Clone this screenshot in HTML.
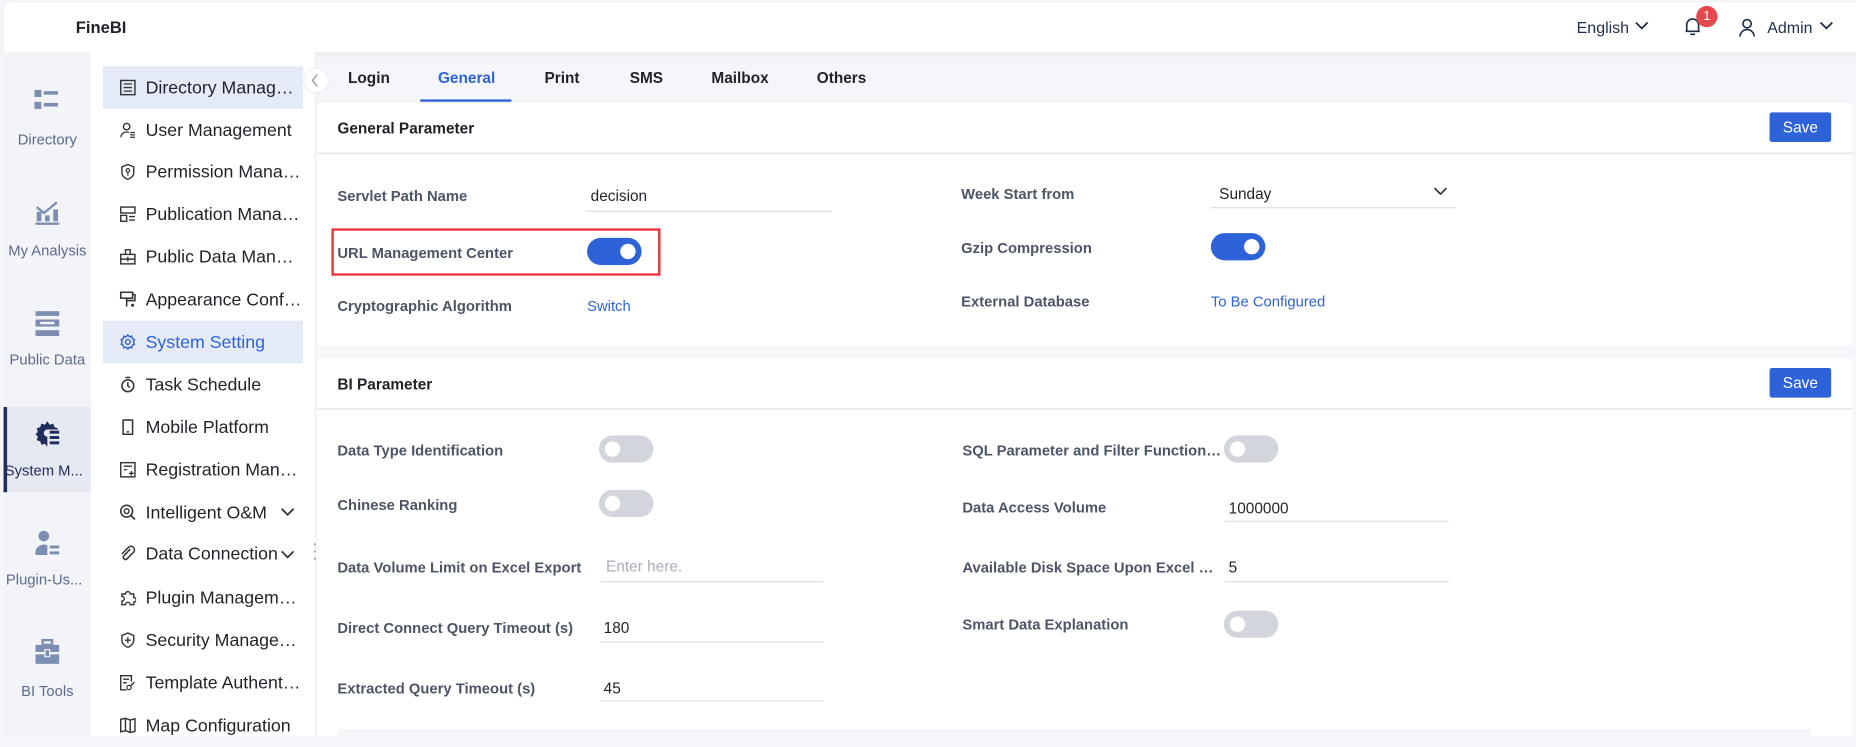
<!DOCTYPE html>
<html><head><meta charset="utf-8"><style>
*{margin:0;padding:0;box-sizing:border-box}
html,body{width:1856px;height:736px;overflow:hidden;background:#f5f6f9;font-family:"Liberation Sans",Arial,sans-serif}
#w{position:absolute;left:0;top:0;width:1568px;height:622px;transform:scale(1.18367,1.18328);transform-origin:0 0;background:#f5f6f9}
.a{position:absolute;white-space:nowrap}
.hdr{left:3px;top:2px;width:1565px;height:42px;background:#fff;border-radius:6px 0 0 0;box-shadow:0 2px 6px rgba(0,0,0,.06)}
.rail{left:3px;top:44px;width:74px;height:578px;background:#f3f4f8}
.ri{position:absolute;left:0;width:74px;text-align:center;font-size:12.5px;color:#5b6b8c}
.nav{left:77px;top:44px;width:190px;height:578px;background:#fff;border-right:1px solid #eceef3}
.ni{position:absolute;left:10px;width:169px;height:36px;font-size:15px;color:#1f2329;line-height:37px;padding-left:36px;overflow:hidden;text-overflow:ellipsis}
.ni svg{position:absolute;left:14px;top:11px}
.sel{background:#e5eaf8}
.tab{top:58px;font-size:13px;font-weight:bold;color:#1f2329}
.card{background:#fff;left:268px;width:1297px}
.lb{font-size:12.5px;font-weight:bold;color:#4b5565}
.save{width:52px;height:25px;background:#2d62d9;color:#fff;font-size:13px;text-align:center;line-height:25px;border-radius:2px}
.ul{height:1px;background:#dcdfe6}
.tg{width:46px;height:23px;border-radius:12px;background:#2d62d9}
.tg::after{content:"";position:absolute;right:5px;top:5px;width:13px;height:13px;border-radius:50%;background:#fff}
.tg.off{background:#d2d5dc}
.tg.off::after{left:5px;right:auto}
.val{font-size:13px;color:#1f2329}
.lnk{font-size:12.5px;color:#2d62d9}
</style></head><body><div id="w">
<div class="a hdr"></div>
<div class="a" style="left:64px;top:15px;font-size:14px;font-weight:bold;color:#1f2329">FineBI</div>
<div class="a" style="left:1332px;top:16px;font-size:13.5px;color:#1f2d4a">English</div>
<svg class="a" style="left:1381px;top:18px" width="12" height="8" viewBox="0 0 12 8"><path d="M1 1l5 5 5-5" fill="none" stroke="#1f2d4a" stroke-width="1.5"/></svg>
<svg class="a" style="left:1423px;top:14px" width="14" height="17" viewBox="0 0 14 17"><path d="M2 12V7a5 5 0 0 1 10 0v5M1 12.5h12M5 15h4" fill="none" stroke="#1f2d4a" stroke-width="1.4"/></svg>
<div class="a" style="left:1433px;top:5px;width:18px;height:18px;border-radius:50%;background:#e5484d;color:#fff;font-size:11px;text-align:center;line-height:18px">1</div>
<svg class="a" style="left:1469px;top:15px" width="14" height="16" viewBox="0 0 14 16"><circle cx="7" cy="5" r="3.5" fill="none" stroke="#1f2d4a" stroke-width="1.4"/><path d="M1 16a6 6 0 0 1 12 0" fill="none" stroke="#1f2d4a" stroke-width="1.4"/></svg>
<div class="a" style="left:1493px;top:16px;font-size:13.5px;color:#1f2d4a">Admin</div>
<svg class="a" style="left:1537px;top:18px" width="12" height="8" viewBox="0 0 12 8"><path d="M1 1l5 5 5-5" fill="none" stroke="#1f2d4a" stroke-width="1.5"/></svg>

<div class="a rail">
 <svg style="position:absolute;left:26px;top:32px" width="22" height="20" viewBox="0 0 22 20"><rect x="0" y="0" width="6" height="6" fill="#7d8eb3"/><rect x="8" y="1" width="12" height="3" fill="#7d8eb3"/><rect x="0" y="10" width="6" height="6" fill="#7d8eb3"/><rect x="8" y="11" width="12" height="3" fill="#7d8eb3"/></svg>
 <div class="ri" style="top:67px">Directory</div>
 <svg style="position:absolute;left:26px;top:125px" width="22" height="22" viewBox="0 0 22 22"><path d="M1 20h20" stroke="#7d8eb3" stroke-width="2"/><rect x="2" y="10" width="4" height="8" fill="#7d8eb3"/><rect x="9" y="13" width="4" height="5" fill="#7d8eb3"/><rect x="16" y="8" width="4" height="10" fill="#7d8eb3"/><path d="M2 6l6 5 5-4 6-5" stroke="#7d8eb3" stroke-width="2" fill="none"/></svg>
 <div class="ri" style="top:161px">My Analysis</div>
 <svg style="position:absolute;left:26px;top:218px" width="22" height="22" viewBox="0 0 22 22"><rect x="1" y="1" width="20" height="4" fill="#7d8eb3"/><rect x="1" y="8" width="20" height="6" fill="#7d8eb3"/><rect x="1" y="17" width="20" height="5" fill="#7d8eb3"/><rect x="5" y="10" width="12" height="2" fill="#f3f4f8"/></svg>
 <div class="ri" style="top:253px">Public Data</div>
 <div style="position:absolute;left:0;top:300px;width:74px;height:72px;background:#e6e9f2;border-left:3px solid #1f2d5a"></div>
 <svg style="position:absolute;left:26px;top:311px" width="22" height="22" viewBox="0 0 22 22"><path d="M11 1l2 3 3-1 1 3 3 1-1 3 2 2-2 2 1 3-3 1-1 3-3-1-2 3-2-3-3 1-1-3-3-1 1-3-2-2 2-2-1-3 3-1 1-3 3 1z" fill="#1f2d5a"/><circle cx="11" cy="11" r="3" fill="#e6e9f2"/><rect x="11" y="8" width="11" height="14" fill="#e6e9f2"/><rect x="13" y="9" width="8" height="2.5" fill="#1f2d5a"/><rect x="13" y="13.5" width="8" height="2.5" fill="#1f2d5a"/><rect x="13" y="18" width="8" height="2.5" fill="#1f2d5a"/></svg>
 <div class="ri" style="top:347px;color:#1f2d5a;text-align:left;left:1px">System M...</div>
 <svg style="position:absolute;left:26px;top:404px" width="22" height="22" viewBox="0 0 22 22"><circle cx="8" cy="5" r="4.5" fill="#7d8eb3"/><path d="M1 21a7 7 0 0 1 10-8v8z" fill="#7d8eb3"/><rect x="13" y="13" width="8" height="2.5" fill="#7d8eb3"/><rect x="13" y="18" width="8" height="2.5" fill="#7d8eb3"/></svg>
 <div class="ri" style="top:439px;text-align:left;left:2px">Plugin-Us...</div>
 <svg style="position:absolute;left:26px;top:496px" width="22" height="22" viewBox="0 0 22 22"><rect x="7" y="1" width="8" height="4" fill="none" stroke="#7d8eb3" stroke-width="2"/><rect x="1" y="5" width="20" height="16" fill="#7d8eb3"/><rect x="1" y="11" width="20" height="2" fill="#f3f4f8"/><rect x="9" y="9" width="4" height="6" fill="#7d8eb3" stroke="#f3f4f8" stroke-width="1"/></svg>
 <div class="ri" style="top:533px">BI Tools</div>
</div>

<div class="a nav">
 <div class="ni sel" style="top:12px"><svg width="14" height="14" viewBox="0 0 14 14"><rect x="1" y="1" width="12" height="12" fill="none" stroke="#333" stroke-width="1.2"/><path d="M3.5 4h7M3.5 7h7M3.5 10h7" stroke="#333" stroke-width="1.1"/></svg>Directory Management</div>
 <div class="ni" style="top:48px"><svg width="14" height="14" viewBox="0 0 14 14"><circle cx="6" cy="4" r="2.7" fill="none" stroke="#333" stroke-width="1.2"/><path d="M1 13a5 5 0 0 1 7-4M9 9h4M9 11h4M9 13h4" fill="none" stroke="#333" stroke-width="1.1"/></svg>User Management</div>
 <div class="ni" style="top:83px"><svg width="14" height="14" viewBox="0 0 14 14"><path d="M7 1l5 2v5c0 3-3 5-5 5.5C5 13 2 11 2 8V3z" fill="none" stroke="#333" stroke-width="1.2"/><circle cx="7" cy="6" r="1.5" fill="none" stroke="#333"/><path d="M7 7.5v3" stroke="#333"/></svg>Permission Management</div>
 <div class="ni" style="top:119px"><svg width="14" height="14" viewBox="0 0 14 14"><rect x="1" y="1" width="12" height="5" fill="none" stroke="#333" stroke-width="1.2"/><rect x="1" y="8" width="5" height="5" fill="none" stroke="#333" stroke-width="1.2"/><path d="M8 9h5M8 12h5" stroke="#333" stroke-width="1.2"/></svg>Publication Management</div>
 <div class="ni" style="top:155px"><svg width="14" height="14" viewBox="0 0 14 14"><rect x="1" y="5" width="12" height="8" fill="none" stroke="#333" stroke-width="1.2"/><path d="M5 5V1h4v4M1 9h12M7 7v4" stroke="#333" stroke-width="1.2" fill="none"/></svg>Public Data Management</div>
 <div class="ni" style="top:191px"><svg width="14" height="14" viewBox="0 0 14 14"><rect x="1" y="1" width="10" height="5" fill="none" stroke="#333" stroke-width="1.3"/><path d="M6 6v7M11 3h2v5H6" stroke="#333" stroke-width="1.3" fill="none"/><circle cx="11" cy="12" r="1.3" fill="#333"/></svg>Appearance Configuration</div>
 <div class="ni sel" style="top:227px;color:#2f63d6"><svg width="14" height="14" viewBox="0 0 14 14"><path d="M7 1l1.3 1.6 2-.5.5 2 1.8 1-.9 1.9.9 1.9-1.8 1-.5 2-2-.5L7 13l-1.3-1.6-2 .5-.5-2-1.8-1 .9-1.9-.9-1.9 1.8-1 .5-2 2 .5z" fill="none" stroke="#2f63d6" stroke-width="1.2"/><circle cx="7" cy="7" r="2" fill="none" stroke="#2f63d6" stroke-width="1.2"/></svg>System Setting</div>
 <div class="ni" style="top:263px"><svg width="14" height="14" viewBox="0 0 14 14"><circle cx="7" cy="8" r="5" fill="none" stroke="#333" stroke-width="1.3"/><path d="M5 1h4M7 5v3l1.5 1.5" stroke="#333" stroke-width="1.3" fill="none"/></svg>Task Schedule</div>
 <div class="ni" style="top:299px"><svg width="14" height="14" viewBox="0 0 14 14"><rect x="3" y="1" width="8" height="12" fill="none" stroke="#333" stroke-width="1.3"/><path d="M6 11h2" stroke="#333" stroke-width="1.3"/></svg>Mobile Platform</div>
 <div class="ni" style="top:335px"><svg width="14" height="14" viewBox="0 0 14 14"><rect x="1" y="1" width="12" height="12" fill="none" stroke="#333" stroke-width="1.2"/><path d="M3.5 4h7M3.5 7h3M8 10h4M10 8v4" stroke="#333" stroke-width="1.1"/></svg>Registration Management</div>
 <div class="ni" style="top:371px"><svg width="14" height="14" viewBox="0 0 14 14"><circle cx="6" cy="6" r="5" fill="none" stroke="#333" stroke-width="1.3"/><circle cx="6" cy="6" r="2" fill="none" stroke="#333" stroke-width="1.2"/><path d="M9 9l4 4" stroke="#333" stroke-width="1.5"/></svg>Intelligent O&amp;M</div>
 <svg class="a" style="left:160px;top:385px" width="12" height="8" viewBox="0 0 12 8"><path d="M1 1l5 5 5-5" fill="none" stroke="#333" stroke-width="1.5"/></svg>
 <div class="ni" style="top:406px;width:150px"><svg width="14" height="14" viewBox="0 0 14 14"><path d="M9 3L3.5 9a1.8 1.8 0 0 0 2.5 2.5L12 5.5a3 3 0 0 0-4.2-4.2L2 7.2" fill="none" stroke="#333" stroke-width="1.3"/></svg>Data Connection</div>
 <svg class="a" style="left:160px;top:421px" width="12" height="8" viewBox="0 0 12 8"><path d="M1 1l5 5 5-5" fill="none" stroke="#333" stroke-width="1.5"/></svg>
 <div class="ni" style="top:443px"><svg width="14" height="14" viewBox="0 0 14 14"><path d="M2 4h3a2 2 0 1 1 4 0h3v3a2 2 0 1 1 0 4v2H9a2 2 0 1 0-4 0H2v-3a2 2 0 1 0 0-4z" fill="none" stroke="#333" stroke-width="1.2"/></svg>Plugin Management</div>
 <div class="ni" style="top:479px"><svg width="14" height="14" viewBox="0 0 14 14"><path d="M7 1l5 2v4c0 3-3 5.5-5 6C5 12.5 2 10 2 7V3z" fill="none" stroke="#333" stroke-width="1.2"/><path d="M7 4.5v5M4.5 7h5" stroke="#333" stroke-width="1.2"/></svg>Security Management</div>
 <div class="ni" style="top:515px"><svg width="14" height="14" viewBox="0 0 14 14"><path d="M10 6V1H1v12h5M3 4h5M3 7h3" fill="none" stroke="#333" stroke-width="1.2"/><circle cx="8" cy="11" r="1.8" fill="none" stroke="#333"/><path d="M9.5 9.5l3-3" stroke="#333" stroke-width="1.2"/></svg>Template Authentication</div>
 <div class="ni" style="top:551px"><svg width="14" height="14" viewBox="0 0 14 14"><path d="M1 2l4-1 4 1.5 4-1V12l-4 1-4-1.5-4 1z M5 1v10.5M9 2.5V13" fill="none" stroke="#333" stroke-width="1.2"/></svg>Map Configuration</div>
</div>
<div class="a" style="left:256px;top:57px;width:22px;height:22px;border-radius:50%;background:#fff;border:1px solid #eceef3"></div>
<svg class="a" style="left:262px;top:62px" width="8" height="12" viewBox="0 0 8 12"><path d="M6 1L2 6l4 5" fill="none" stroke="#9aa3b5" stroke-width="1.3"/></svg>
<svg class="a" style="left:264px;top:458px" width="8" height="16" viewBox="0 0 8 16"><g fill="#aab"><circle cx="2" cy="2" r="1"/><circle cx="6" cy="2" r="1"/><circle cx="2" cy="8" r="1"/><circle cx="6" cy="8" r="1"/><circle cx="2" cy="14" r="1"/><circle cx="6" cy="14" r="1"/></g></svg>

<div class="a tab" style="left:294px">Login</div>
<div class="a tab" style="left:370px;color:#2f63d6">General</div>
<div class="a" style="left:355px;top:84px;width:77px;height:2px;background:#2f63d6"></div>
<div class="a tab" style="left:460px">Print</div>
<div class="a tab" style="left:532px">SMS</div>
<div class="a tab" style="left:601px">Mailbox</div>
<div class="a tab" style="left:690px">Others</div>

<div class="a card" style="top:87px;height:205px"></div>
<div class="a" style="left:285px;top:101px;font-size:13px;font-weight:bold;color:#1f2329">General Parameter</div>
<div class="a save" style="left:1495px;top:95px">Save</div>
<div class="a ul" style="left:268px;top:129px;width:1297px"></div>
<div class="a lb" style="left:285px;top:159px">Servlet Path Name</div>
<div class="a val" style="left:499px;top:158px">decision</div>
<div class="a ul" style="left:495px;top:178px;width:208px"></div>
<div class="a" style="left:280px;top:193px;width:278px;height:40px;border:2px solid #e8333a"></div>
<div class="a lb" style="left:285px;top:207px">URL Management Center</div>
<div class="a tg" style="left:496px;top:201px"></div>
<div class="a lb" style="left:285px;top:252px">Cryptographic Algorithm</div>
<div class="a lnk" style="left:496px;top:252px">Switch</div>
<div class="a lb" style="left:812px;top:157px">Week Start from</div>
<div class="a val" style="left:1030px;top:156px">Sunday</div>
<svg class="a" style="left:1211px;top:158px" width="12" height="8" viewBox="0 0 12 8"><path d="M1 1l5 5 5-5" fill="none" stroke="#333" stroke-width="1.4"/></svg>
<div class="a ul" style="left:1023px;top:175px;width:207px"></div>
<div class="a lb" style="left:812px;top:203px">Gzip Compression</div>
<div class="a tg" style="left:1023px;top:197px"></div>
<div class="a lb" style="left:812px;top:248px">External Database</div>
<div class="a lnk" style="left:1023px;top:248px">To Be Configured</div>

<div class="a card" style="top:303px;height:319px"></div>
<div class="a" style="left:285px;top:317px;font-size:13px;font-weight:bold;color:#1f2329">BI Parameter</div>
<div class="a save" style="left:1495px;top:311px">Save</div>
<div class="a ul" style="left:268px;top:345px;width:1297px"></div>
<div class="a lb" style="left:285px;top:374px">Data Type Identification</div>
<div class="a tg off" style="left:506px;top:368px"></div>
<div class="a lb" style="left:285px;top:420px">Chinese Ranking</div>
<div class="a tg off" style="left:506px;top:414px"></div>
<div class="a lb" style="left:285px;top:473px">Data Volume Limit on Excel Export</div>
<div class="a" style="left:512px;top:471px;font-size:13px;color:#a8adb8">Enter here.</div>
<div class="a ul" style="left:507px;top:491px;width:189px"></div>
<div class="a lb" style="left:285px;top:524px">Direct Connect Query Timeout (s)</div>
<div class="a val" style="left:510px;top:523px">180</div>
<div class="a ul" style="left:507px;top:542px;width:189px"></div>
<div class="a lb" style="left:285px;top:575px">Extracted Query Timeout (s)</div>
<div class="a val" style="left:510px;top:574px">45</div>
<div class="a ul" style="left:507px;top:592px;width:189px"></div>
<div class="a lb" style="left:813px;top:374px">SQL Parameter and Filter Function…</div>
<div class="a tg off" style="left:1034px;top:368px"></div>
<div class="a lb" style="left:813px;top:422px">Data Access Volume</div>
<div class="a val" style="left:1038px;top:422px">1000000</div>
<div class="a ul" style="left:1035px;top:440px;width:189px"></div>
<div class="a lb" style="left:813px;top:473px">Available Disk Space Upon Excel …</div>
<div class="a val" style="left:1038px;top:472px">5</div>
<div class="a ul" style="left:1035px;top:491px;width:189px"></div>
<div class="a lb" style="left:813px;top:521px">Smart Data Explanation</div>
<div class="a tg off" style="left:1034px;top:516px"></div>
<div class="a" style="left:285px;top:616px;width:1245px;height:6px;background:#f5f6f9"></div>
</div></body></html>
